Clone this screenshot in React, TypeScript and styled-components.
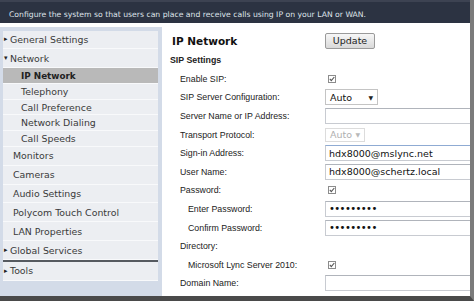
import styled, { createGlobalStyle } from 'styled-components';

const GlobalStyle = createGlobalStyle`
  html, body {
    margin: 0;
    padding: 0;
    background: #fff;
  }
  body {
    width: 474px;
    height: 301px;
    overflow: hidden;
  }
`;

const Frame = styled.div`
  width: 470px;
  height: 296px;
  border-right: 4px solid #7b7b7b;
  border-bottom: 5px solid #4a4a4a;
  display: flex;
  flex-direction: column;
  overflow: hidden;
  background: #fff;
`;

const Banner = styled.div`
  flex: none;
  height: 23px;
  box-sizing: border-box;
  padding: 7.5px 0 0 9px;
  border-top: 2px solid #3d4352;
  background: #2c3342;
  color: #dfe3ea;
  font: 7.7px 'DejaVu Sans', sans-serif;
  line-height: 9px;
  white-space: nowrap;
`;

const Body = styled.div`
  flex: 1;
  display: flex;
  min-height: 0;
`;

const Sidebar = styled.nav`
  flex: none;
  width: 162px;
  margin-top: 4px;
  box-sizing: border-box;
  padding: 3.5px 4px 0 3px;
  background: #d3dbe8;
  font: 9.4px 'DejaVu Sans', sans-serif;
  color: #333;
`;

const NavItem = styled.div<{ $sub?: boolean; $active?: boolean; $indent: number; $split?: boolean }>`
  height: ${(p) => (p.$sub ? 15.7 : p.$split ? 20.7 : 18.9)}px;
  box-sizing: border-box;
  display: flex;
  align-items: center;
  padding-left: ${(p) => p.$indent}px;
  background: ${(p) => (p.$active ? '#b9b9b9' : '#eceef2')};
  border-bottom: 1px solid #f8f9fb;
  border-top: ${(p) => (p.$split ? '2px solid #565a60' : 'none')};
  font-weight: ${(p) => (p.$active ? 700 : 400)};
  font-size: ${(p) => (p.$active ? 8.8 : 9.4)}px;
  color: ${(p) => (p.$active ? '#222' : '#3a3a3a')};
  white-space: nowrap;
`;

const Caret = styled.span`
  display: inline-block;
  width: 5px;
  margin-right: 1px;
  font-size: 7px;
  color: #222;
`;

const Content = styled.main`
  flex: 1;
  min-width: 0;
  padding: 8px 0 0 8px;
  overflow: hidden;
`;

const Form = styled.div`
  display: grid;
  grid-template-columns: 155px 1fr;
  grid-template-rows: 19px 19.5px;
  grid-auto-rows: 18.6px;
  align-items: center;
  font: 8.8px 'Liberation Sans', Arial, sans-serif;
  color: #222;
`;

const Title = styled.h1`
  margin: 0 0 0 2px;
  font: bold 10.5px 'DejaVu Sans', sans-serif;
  color: #111;
`;

const UpdateButton = styled.button`
  justify-self: start;
  width: 50px;
  height: 16px;
  padding: 0;
  border: 1px solid #9a9a9a;
  border-radius: 2px;
  background: linear-gradient(#f7f7f7, #d9d9d9);
  font: 9.5px 'DejaVu Sans', sans-serif;
  color: #222;
`;

const Section = styled.div`
  grid-column: 1 / span 2;
  font: bold 8.8px 'Liberation Sans', Arial, sans-serif;
  color: #222;
`;

const Label = styled.div<{ $indent: number }>`
  padding-left: ${(p) => p.$indent}px;
  white-space: nowrap;
`;

const Field = styled.input<{ $focused?: boolean }>`
  justify-self: start;
  width: 160px;
  height: 16px;
  box-sizing: border-box;
  margin: 0;
  padding: 0 3px;
  border: 1px solid #c8cbd1;
  border-top-color: ${(p) => (p.$focused ? '#8fabd3' : '#b0b4bb')};
  background: #fff;
  font: 9.5px 'DejaVu Sans', sans-serif;
  color: #111;
  outline: none;
`;

const SecretField = styled(Field)`
  font-size: 10px;
  letter-spacing: -0.6px;
`;

const SelectBox = styled.div<{ $disabled?: boolean }>`
  justify-self: start;
  display: flex;
  align-items: center;
  justify-content: space-between;
  width: ${(p) => (p.$disabled ? 40 : 53)}px;
  height: ${(p) => (p.$disabled ? 14 : 16)}px;
  box-sizing: border-box;
  padding: 0 4px 0 4px;
  border: 1px solid ${(p) => (p.$disabled ? '#dcdcdc' : '#c4c4c4')};
  background: #fff;
  font: 9.5px 'DejaVu Sans', sans-serif;
  color: ${(p) => (p.$disabled ? '#b0b0b0' : '#111')};
`;

const SelectArrow = styled.span<{ $disabled?: boolean }>`
  font-size: 6px;
  color: ${(p) => (p.$disabled ? '#b8b8b8' : '#222')};
`;

const CheckWrap = styled.div`
  display: flex;
  padding-left: 3px;
`;

const Check = () => (
  <CheckWrap>
    <svg width="8" height="8" viewBox="0 0 8 8">
      <rect x="0.5" y="0.5" width="7" height="7" fill="#fff" stroke="#8c8c8c" />
      <polyline points="1.8,3.8 3.3,5.6 6.3,2" fill="none" stroke="#555" strokeWidth="1.1" />
    </svg>
  </CheckWrap>
);

const Select = ({ value, disabled }: { value: string; disabled?: boolean }) => (
  <SelectBox $disabled={disabled}>
    <span>{value}</span>
    <SelectArrow $disabled={disabled}>▼</SelectArrow>
  </SelectBox>
);

type NavEntry = { text: string; sub?: boolean; active?: boolean; caret?: string; split?: boolean };

const nav: NavEntry[] = [
  { text: 'General Settings', caret: '▸' },
  { text: 'Network', caret: '▾' },
  { text: 'IP Network', sub: true, active: true },
  { text: 'Telephony', sub: true },
  { text: 'Call Preference', sub: true },
  { text: 'Network Dialing', sub: true },
  { text: 'Call Speeds', sub: true },
  { text: 'Monitors' },
  { text: 'Cameras' },
  { text: 'Audio Settings' },
  { text: 'Polycom Touch Control' },
  { text: 'LAN Properties' },
  { text: 'Global Services', caret: '▸' },
  { text: 'Tools', caret: '▸', split: true },
];

export default function App() {
  return (
    <>
      <GlobalStyle />
      <Frame>
        <Banner>Configure the system so that users can place and receive calls using IP on your LAN or WAN.</Banner>
        <Body>
          <Sidebar>
            {nav.map((n) => (
              <NavItem
                key={n.text}
                $sub={n.sub}
                $active={n.active}
                $split={n.split}
                $indent={n.caret ? 1 : n.sub ? 18 : 10}
              >
                {n.caret && <Caret>{n.caret}</Caret>}
                {n.text}
              </NavItem>
            ))}
          </Sidebar>
          <Content>
            <Form>
              <Title>IP Network</Title>
              <UpdateButton>Update</UpdateButton>
              <Section>SIP Settings</Section>

              <Label $indent={10}>Enable SIP:</Label>
              <Check />
              <Label $indent={10}>SIP Server Configuration:</Label>
              <Select value="Auto" />
              <Label $indent={10}>Server Name or IP Address:</Label>
              <Field readOnly defaultValue="" />
              <Label $indent={10}>Transport Protocol:</Label>
              <Select value="Auto" disabled />
              <Label $indent={10}>Sign-in Address:</Label>
              <Field readOnly $focused defaultValue="hdx8000@mslync.net" />
              <Label $indent={10}>User Name:</Label>
              <Field readOnly defaultValue="hdx8000@schertz.local" />
              <Label $indent={10}>Password:</Label>
              <Check />
              <Label $indent={18}>Enter Password:</Label>
              <SecretField readOnly type="password" defaultValue="password1" />
              <Label $indent={18}>Confirm Password:</Label>
              <SecretField readOnly type="password" defaultValue="password1" />
              <Label $indent={10}>Directory:</Label>
              <span />
              <Label $indent={18}>Microsoft Lync Server 2010:</Label>
              <Check />
              <Label $indent={10}>Domain Name:</Label>
              <Field readOnly defaultValue="" />
            </Form>
          </Content>
        </Body>
      </Frame>
    </>
  );
}
